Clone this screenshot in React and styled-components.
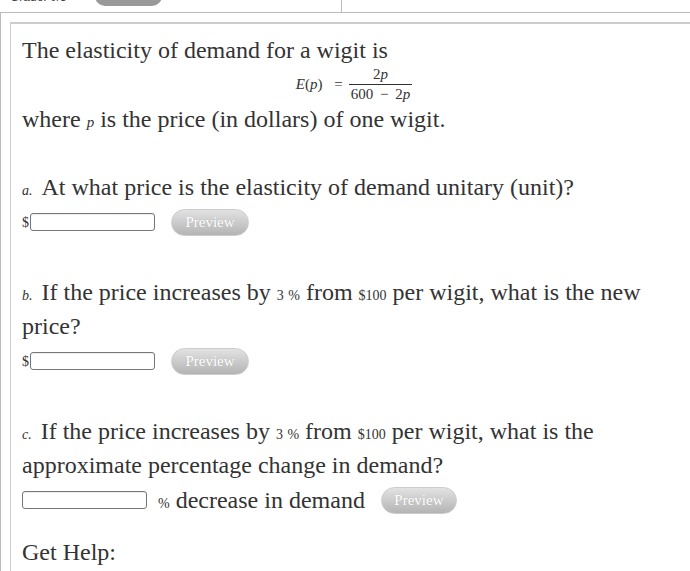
import React from 'react'
import styled, { createGlobalStyle } from 'styled-components'

const GlobalStyle = createGlobalStyle`
  html, body {
    margin: 0;
    padding: 0;
    background: #fff;
  }
  body {
    font-family: "Liberation Serif", "Times New Roman", serif;
    color: #333;
    overflow: hidden;
  }
`

const TopBar = styled.div`
  display: flex;
  height: 12px;
  border-bottom: 1px solid #bbb;
`

const GradeBox = styled.div`
  width: 342px;
  display: flex;
  align-items: flex-end;
  gap: 28px;
  padding-left: 10px;
  border-right: 1px solid #bbb;
  overflow: hidden;
  box-sizing: border-box;
`

const GradeText = styled.span`
  font-family: "Liberation Sans", Arial, sans-serif;
  font-size: 12px;
  line-height: 13px;
  margin-bottom: 8px;
  color: #444;
  white-space: nowrap;
`

const PrintButton = styled.span`
  display: block;
  width: 67px;
  height: 20px;
  margin-bottom: 6px;
  border-radius: 10px;
  background: #999;
`

const Main = styled.div`
  border-left: 1px solid #bbb;
  padding: 9px 0 0 9px;
  min-height: 600px;
`

const Problem = styled.div`
  border-top: 2px solid #ccc;
  border-left: 1px solid #ccc;
  padding: 9px 10px 0 11px;
  min-height: 600px;
  font-size: 24px;
  line-height: 34px;
`

const Line = styled.div`
  line-height: 34px;
`

const Formula = styled.div`
  display: flex;
  justify-content: center;
  align-items: center;
  height: 35px;
  font-size: 15px;
  line-height: 1;
  padding-left: 6px;
`

const Lhs = styled.span`
  margin-right: 6px;
  word-spacing: 8px;
`

const Fraction = styled.span`
  display: inline-flex;
  flex-direction: column;
  align-items: center;
`

const Num = styled.span`
  padding-bottom: 2px;
  border-bottom: 1px solid #333;
  width: 100%;
  text-align: center;
`

const Den = styled.span`
  padding: 2px 2px 0;
  word-spacing: 3px;
`

const MathVar = styled.i`
  font-size: 15px;
  line-height: 1;
`

const Part = styled.div`
  margin-top: ${props => props.gap}px;
`

const Label = styled.i`
  font-size: 14px;
  line-height: 1;
  margin-right: 9px;
`

const Small = styled.span`
  font-size: 14px;
  line-height: 1;
  word-spacing: 1px;
`

const Row = styled.div`
  display: flex;
  align-items: center;
  height: 28px;
  margin-top: 4px;
`

const Dollar = styled.span`
  font-size: 14px;
  line-height: 1;
  margin-right: 1px;
  position: relative;
  top: 1px;
`

const Input = styled.span`
  display: block;
  width: ${props => props.width}px;
  height: 18px;
  border: 1px solid #777;
  border-radius: 3px;
  box-sizing: border-box;
  background: #fff;
  box-shadow: inset 0 1px 1px rgba(0, 0, 0, 0.08);
`

const Suffix = styled.span`
  margin-left: 11px;
  white-space: nowrap;
  line-height: 28px;
`

const Preview = styled.span`
  display: flex;
  align-items: center;
  justify-content: center;
  width: ${props => props.width}px;
  height: 27px;
  margin-left: ${props => props.left}px;
  border-radius: 14px;
  border: 1px solid #ccc;
  box-sizing: border-box;
  background: linear-gradient(#e2e2e2, #b4b4b4);
  color: #fff;
  font-size: 15px;
  line-height: 1;
  text-shadow: 0 0 1px rgba(0, 0, 0, 0.15);
`

const Help = styled.div`
  margin-top: 21px;
`

export default function App() {
  return (
    <>
      <GlobalStyle />
      <TopBar>
        <GradeBox>
          <GradeText>Grade: 0/3</GradeText>
          <PrintButton />
        </GradeBox>
      </TopBar>
      <Main>
        <Problem>
          <Line>The elasticity of demand for a wigit is</Line>
          <Formula>
            <Lhs><i>E</i>(<i>p</i>) =</Lhs>
            <Fraction>
              <Num>2<i>p</i></Num>
              <Den>600 − 2<i>p</i></Den>
            </Fraction>
          </Formula>
          <Line>where <MathVar>p</MathVar> is the price (in dollars) of one wigit.</Line>

          <Part gap={34}>
            <Line><Label>a.</Label>At what price is the elasticity of demand unitary (unit)?</Line>
            <Row>
              <Dollar>$</Dollar>
              <Input width={125} />
              <Preview width={78} left={16}>Preview</Preview>
            </Row>
          </Part>

          <Part gap={39}>
            <Line>
              <Label>b.</Label>If the price increases by <Small>3 %</Small> from <Small>$100</Small> per wigit, what is the new price?
            </Line>
            <Row>
              <Dollar>$</Dollar>
              <Input width={125} />
              <Preview width={78} left={16}>Preview</Preview>
            </Row>
          </Part>

          <Part gap={39}>
            <Line>
              <Label>c.</Label>If the price increases by <Small>3 %</Small> from <Small>$100</Small> per wigit, what is the approximate percentage change in demand?
            </Line>
            <Row>
              <Input width={125} />
              <Suffix><Small>%</Small> decrease in demand</Suffix>
              <Preview width={76} left={16}>Preview</Preview>
            </Row>
          </Part>

          <Help>Get Help:</Help>
        </Problem>
      </Main>
    </>
  )
}
